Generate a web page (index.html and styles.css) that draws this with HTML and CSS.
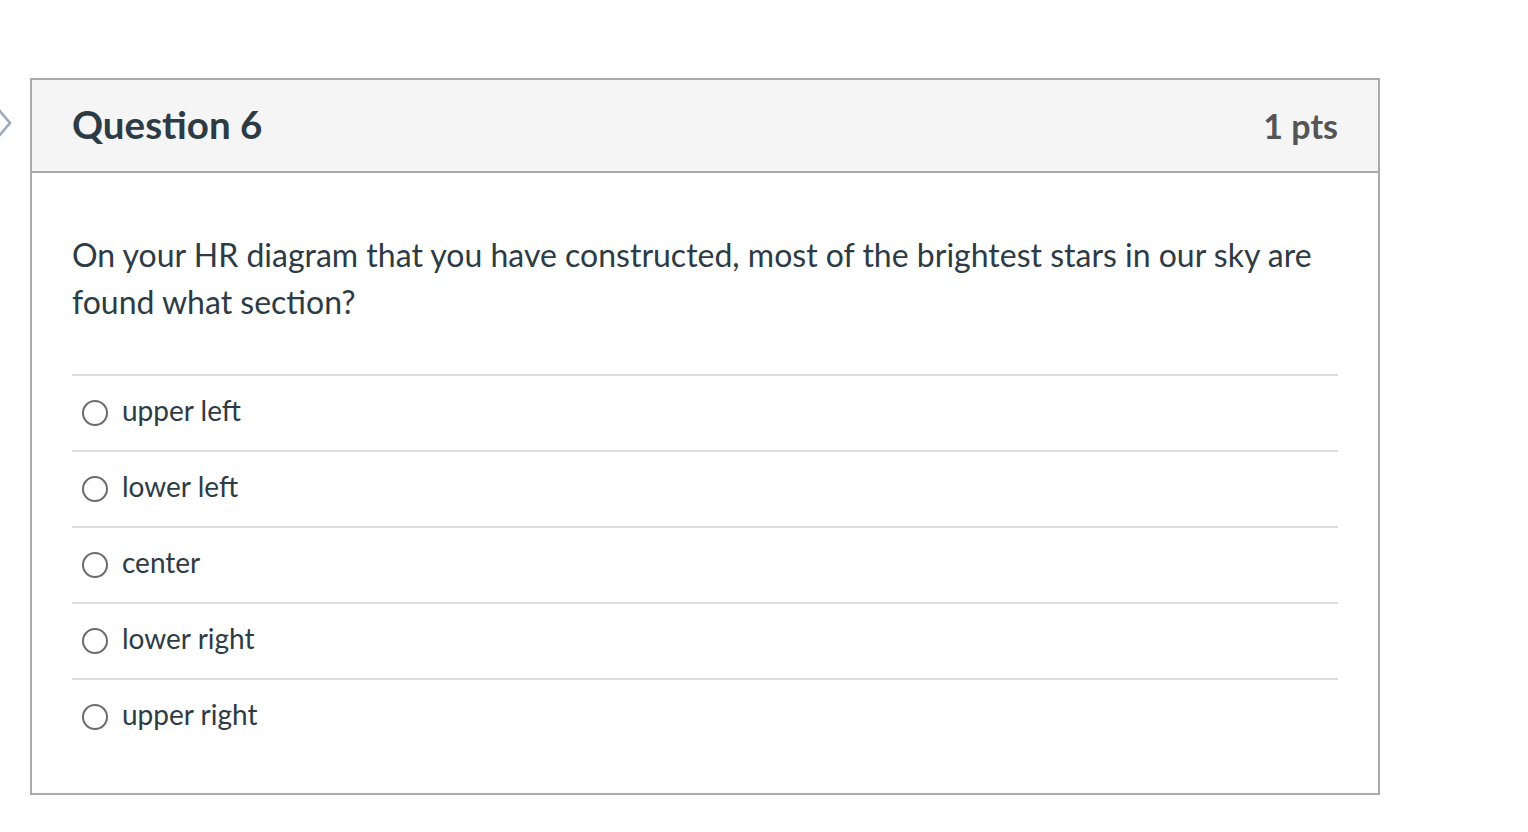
FILE: index.html
```html
<!DOCTYPE html>
<html>
<head>
<meta charset="utf-8">
<link rel="stylesheet" href="styles.css">
</head>
<body>
<div class="page">
  <svg class="chev" width="16" height="32" viewBox="0 0 16 32"><polyline points="-2,2 10,16 -2,30" fill="none" stroke="#9aabbd" stroke-width="2.6"/></svg>
  <div class="card">
    <div class="head">
      <span class="qname">Question 6</span>
      <span class="pts">1 pts</span>
    </div>
    <div class="body">
      <p class="qtext">On your HR diagram that you have constructed, most of the brightest stars in our sky are found what section?</p>
      <div class="answers">
        <div class="ans"><span class="radio"></span><span class="label">upper left</span></div>
        <div class="ans"><span class="radio"></span><span class="label">lower left</span></div>
        <div class="ans"><span class="radio"></span><span class="label">center</span></div>
        <div class="ans"><span class="radio"></span><span class="label">lower right</span></div>
        <div class="ans"><span class="radio"></span><span class="label">upper right</span></div>
      </div>
    </div>
  </div>
</div>
</body>
</html>
```

FILE: styles.css
```css
html, body { margin: 0; padding: 0; background: #fff; }
body { font-family: Lato, "Open Sans", sans-serif; color: #2d3b45; }
.page { position: relative; padding: 78px 0 0 30px; }
.chev { position: absolute; left: 0; top: 107px; }
.card { width: 1350px; box-sizing: border-box; border: 2px solid #aaaaaa; }
.head { height: 91px; background: #f5f5f5; border-bottom: 2px solid #aaaaaa; display: flex; align-items: center; justify-content: space-between; padding: 0 40px; }
.qname { font-weight: 700; font-size: 38.5px; color: #2d3b45; margin-top: -4px; }
.pts { font-weight: 700; font-size: 34px; color: #555555; }
.body { padding: 58px 40px 39px; }
.qtext { margin: 0 0 49px; font-size: 32px; line-height: 47px; }
.ans { height: 74px; border-top: 2px solid #dddddd; display: flex; align-items: center; padding-left: 10px; }
.radio { width: 22px; height: 22px; border: 2px solid #6b6b6b; border-radius: 50%; margin-right: 14px; flex: none; margin-top: -1px; }
.label { font-size: 28px; margin-top: -7px; }
```
